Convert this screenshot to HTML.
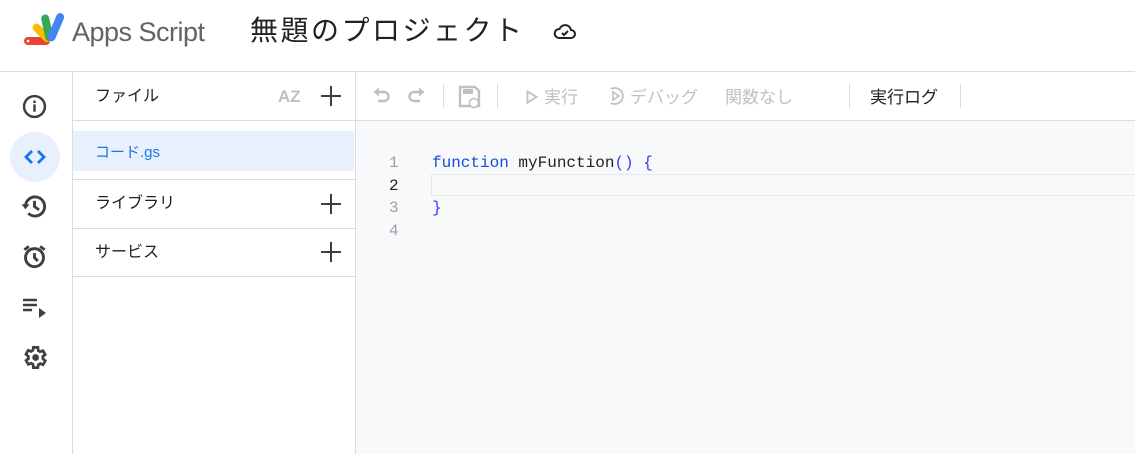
<!DOCTYPE html>
<html><head><meta charset="utf-8"><style>
*{box-sizing:border-box;margin:0;padding:0}
body{width:1135px;height:454px;overflow:hidden;background:#fff;font-family:"Liberation Sans","Noto Sans CJK JP",sans-serif;position:relative;color:#3c4043}
.a{position:absolute}
.hl{position:absolute;background:#dadce0}
.t{position:absolute;font-size:16px;white-space:nowrap;line-height:20px}
.plus{position:absolute;width:22px;height:22px}
.plus:before,.plus:after{content:"";position:absolute;background:#3c4043}
.plus:before{left:10px;top:1px;width:2.4px;height:20px}
.plus:after{top:10px;left:1px;height:2.4px;width:20px}
.mono{font-family:"Liberation Mono","DejaVu Sans Mono",monospace;font-size:16px}
</style></head><body>
<!-- header -->
<svg class="a" style="left:24px;top:13px" width="44" height="34" viewBox="0 0 44 34">
<g transform="translate(26 28)">
<rect x="-26" y="-4" width="26" height="8" rx="4" fill="#ea4335"/>
<rect x="-23" y="-4" width="23" height="8" rx="4" fill="#fbbc04" transform="rotate(45)"/>
<rect x="-27" y="-4" width="27" height="8" rx="4" fill="#34a853" transform="rotate(78)"/>
<rect x="-30" y="-4" width="30" height="8" rx="4" fill="#4285f4" transform="rotate(113)"/>
<circle cx="-22" cy="0" r="1.3" fill="#fff"/>
</g>
</svg>
<div class="t" style="left:72px;top:16px;font-size:27px;line-height:32px;color:#5f6368;letter-spacing:-0.5px">Apps Script</div>
<div class="t" style="left:250px;top:14px;font-size:28px;line-height:34px;color:#202124;letter-spacing:2.5px">無題のプロジェクト</div>
<svg class="a" style="left:553px;top:22px" width="24" height="20" viewBox="0 0 24 20"><path d="M6 16h12a4 4 0 0 0 0-8 6 6 0 0 0-11.5-1A4.5 4.5 0 0 0 6 16z" fill="none" stroke="#202124" stroke-width="2"/><path d="M9 11l2 2 4-4" fill="none" stroke="#202124" stroke-width="2"/></svg>
<div class="hl" style="left:0;top:71px;width:1135px;height:1px"></div>
<!-- rail -->
<div class="hl" style="left:72px;top:72px;width:1px;height:382px"></div>
<svg class="a" style="left:22px;top:94px" width="25" height="25" viewBox="0 0 24 24"><circle cx="12" cy="12" r="10" fill="none" stroke="#3c4043" stroke-width="2.4"/><rect x="10.8" y="10" width="2.4" height="7" fill="#3c4043"/><rect x="10.8" y="6.3" width="2.4" height="2.4" fill="#3c4043"/></svg>
<div class="a" style="left:10px;top:132px;width:50px;height:50px;border-radius:25px;background:#e8f0fe"></div>
<svg class="a" style="left:23px;top:145px" width="24" height="24" viewBox="0 0 24 24"><path d="M9 6l-6 6 6 6M15 6l6 6-6 6" fill="none" stroke="#1a73e8" stroke-width="2.8"/></svg>
<svg class="a" style="left:21px;top:193px" width="27" height="27" viewBox="0 0 24 24"><path d="M4 12a8.5 8.5 0 1 1 2.5 6" fill="none" stroke="#3c4043" stroke-width="2.6"/><path d="M0.5 10l3.5 4.5 3.5-4.5z" fill="#3c4043"/><path d="M12 7v5l4 3" fill="none" stroke="#3c4043" stroke-width="2.6"/></svg>
<svg class="a" style="left:21px;top:243px" width="27" height="27" viewBox="0 0 24 24"><circle cx="12" cy="13" r="8" fill="none" stroke="#3c4043" stroke-width="2.6"/><path d="M12 9v4l3 3M3 6l4-3M21 6l-4-3" fill="none" stroke="#3c4043" stroke-width="2.6"/></svg>
<svg class="a" style="left:23px;top:296px" width="26" height="24" viewBox="0 0 26 24"><path d="M0 4h14M0 9h14M0 14h9" stroke="#3c4043" stroke-width="2.6"/><path d="M16 12l7 5-7 5z" fill="#3c4043"/></svg>
<svg class="a" style="left:21px;top:344px" width="27" height="27" viewBox="0 0 24 24"><path d="M19.4 13a7.5 7.5 0 0 0 0-2l2.1-1.6-2-3.5-2.5 1a7 7 0 0 0-1.7-1L15 3h-4l-.4 2.6a7 7 0 0 0-1.7 1l-2.5-1-2 3.5L6.6 11a7.5 7.5 0 0 0 0 2l-2.1 1.6 2 3.5 2.5-1a7 7 0 0 0 1.7 1L11 21h4l.4-2.6a7 7 0 0 0 1.7-1l2.5 1 2-3.5z" fill="none" stroke="#3c4043" stroke-width="2.4"/><circle cx="13" cy="12" r="3" fill="#3c4043"/></svg>
<!-- file panel -->
<div class="hl" style="left:355px;top:72px;width:1px;height:382px"></div>
<div class="t" style="left:95px;top:87px;color:#202124">ファイル</div>
<div class="t" style="left:278px;top:87px;font-size:17px;font-weight:bold;color:#bdc1c6">AZ</div>
<div class="plus" style="left:320px;top:85px"></div>
<div class="hl" style="left:73px;top:120px;width:282px;height:1px"></div>
<div class="a" style="left:73px;top:131px;width:281px;height:40px;background:#e8f0fe"></div>
<div class="t" style="left:95px;top:143px;font-size:15px;color:#1a73e8">コード.gs</div>
<div class="hl" style="left:73px;top:179px;width:282px;height:1px"></div>
<div class="t" style="left:95px;top:194px;color:#202124">ライブラリ</div>
<div class="plus" style="left:320px;top:193px"></div>
<div class="hl" style="left:73px;top:228px;width:282px;height:1px"></div>
<div class="t" style="left:95px;top:243px;color:#202124">サービス</div>
<div class="plus" style="left:320px;top:241px"></div>
<div class="hl" style="left:73px;top:276px;width:282px;height:1px"></div>
<!-- toolbar -->
<div class="hl" style="left:356px;top:120px;width:779px;height:1px"></div>
<div class="a" style="left:356px;top:121px;width:779px;height:333px;background:#f8f9fa"></div>
<svg class="a" style="left:372px;top:87px" width="20" height="18" viewBox="0 0 20 18"><path d="M5 5h7a4.5 4.5 0 0 1 0 9H6" fill="none" stroke="#bdc1c6" stroke-width="2.4"/><path d="M1.5 5l5.5-4.5v9z" fill="#bdc1c6"/></svg>
<svg class="a" style="left:406px;top:87px" width="20" height="18" viewBox="0 0 20 18"><path d="M15 5H8a4.5 4.5 0 0 0 0 9h6" fill="none" stroke="#bdc1c6" stroke-width="2.4"/><path d="M18.5 5l-5.5-4.5v9z" fill="#bdc1c6"/></svg>
<div class="hl" style="left:443px;top:84px;width:1px;height:24px"></div>
<svg class="a" style="left:458px;top:85px" width="24" height="24" viewBox="0 0 24 24"><path d="M2 2h15l4 4v15H2z" fill="none" stroke="#bdc1c6" stroke-width="2.4"/><rect x="5" y="4" width="10" height="5" fill="#bdc1c6"/><circle cx="16" cy="18" r="4.5" fill="#fff" stroke="#bdc1c6" stroke-width="1.5"/></svg>
<div class="hl" style="left:497px;top:84px;width:1px;height:24px"></div>
<svg class="a" style="left:526px;top:90px" width="12" height="14" viewBox="0 0 12 14"><path d="M1.5 1.5l9 5.5-9 5.5z" fill="none" stroke="#bdc1c6" stroke-width="1.8"/></svg>
<div class="t" style="left:544px;top:88px;color:#bdc1c6;font-size:17px">実行</div>
<svg class="a" style="left:606px;top:86px" width="20" height="20" viewBox="0 0 20 20"><path d="M5 3a8 8 0 1 1 0 14" fill="none" stroke="#bdc1c6" stroke-width="1.8"/><path d="M7 6l6 4-6 4z" fill="none" stroke="#bdc1c6" stroke-width="1.6"/></svg>
<div class="t" style="left:630px;top:88px;color:#bdc1c6;font-size:17px">デバッグ</div>
<div class="t" style="left:725px;top:88px;color:#bdc1c6;font-size:17px">関数なし</div>
<div class="hl" style="left:849px;top:84px;width:1px;height:24px"></div>
<div class="t" style="left:870px;top:88px;color:#202124;font-size:17px">実行ログ</div>
<div class="hl" style="left:960px;top:84px;width:1px;height:24px"></div>
<!-- editor -->
<div class="a" style="left:431px;top:174px;width:704px;height:22px;border:1px solid #e6e8ea;border-right:none"></div>
<div class="a mono" style="left:389px;top:152px;color:#9aa0a6;line-height:22.6px">1<br><span style="color:#202124">2</span><br>3<br>4</div>
<div class="a mono" style="left:432px;top:152px;line-height:22.6px;color:#202124;white-space:pre"><span style="color:#1a4cd6">function</span> myFunction<span style="color:#3a3af5">()</span> <span style="color:#3a3af5">{</span>

<span style="color:#3a3af5">}</span></div>
</body></html>
